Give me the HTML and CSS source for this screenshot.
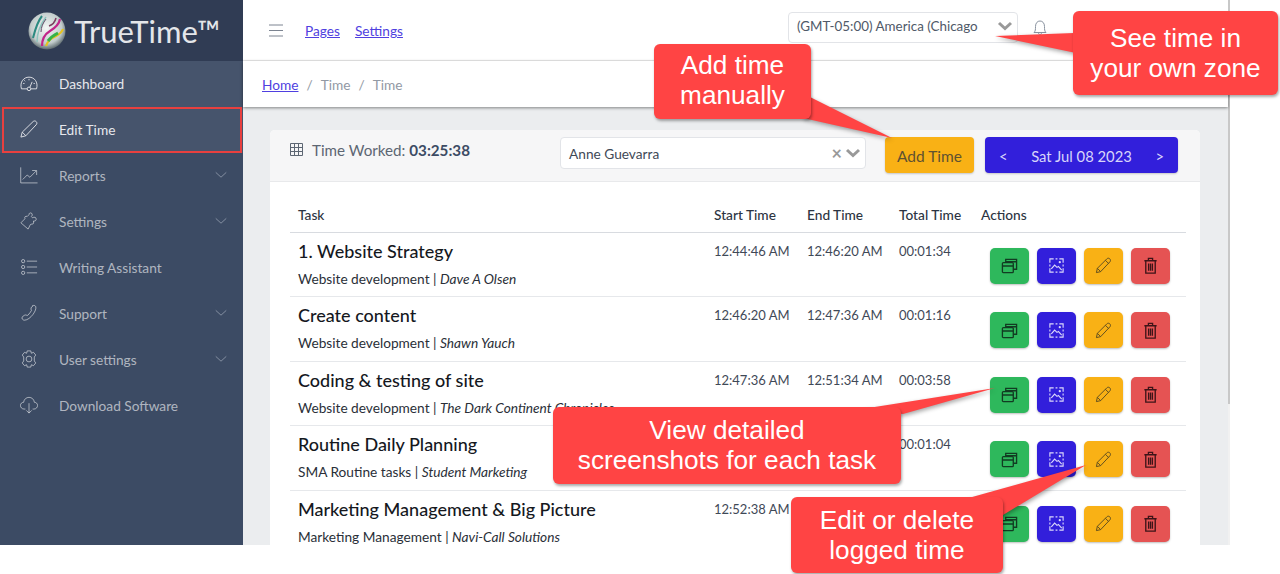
FILE: index.html
```html
<!DOCTYPE html>
<html lang="en">
<head>
  <meta charset="UTF-8">
  <meta name="viewport" content="width=device-width, initial-scale=1.0">
  <title>TrueTime - Edit Time</title>
  <link rel="stylesheet" href="styles.css">
</head>
<body>
  <svg class="defs" width="0" height="0">
    <symbol id="i-chev" viewBox="0 0 16 16"><path d="M2 5l6 5.500L14 5" fill="none" stroke="currentColor"/></symbol>
    <symbol id="i-copy" viewBox="0 0 18 18"><g fill="none" stroke="currentColor" stroke-width="1.400"><rect x="1.500" y="6" width="11.500" height="10.500" rx="1"/><path d="M1.500 9.500H13M5 6V2.500h11.500V13H13M5 5h11.500"/></g></symbol>
    <symbol id="i-img" viewBox="0 0 18 18"><g fill="none" stroke="currentColor" stroke-width="1.200"><path d="M6 2H2v4M12 2h4v4M2 12v4h4M16 12v4h-4M8 2h2M8 16h2M2 8v2M16 8v2"/><path d="M3.500 12.500l3.500-4 2.500 2.500 1.500-1 3.500 4"/><circle cx="12.500" cy="5.500" r=".6"/></g></symbol>
    <symbol id="i-pen" viewBox="0 0 18 18"><g fill="none" stroke="currentColor" stroke-width="1"><path d="M1.500 16.500l1-4.500L12.500 2c1-1 2.300-.9 3.200 0s1 2.200 0 3.200L6 15.500z"/><path d="M2.500 12L6 15.500M11 3.500l3.500 3.500"/></g></symbol>
    <symbol id="i-trash" viewBox="0 0 18 18"><g fill="none" stroke="currentColor" stroke-width="1.400"><path d="M2.500 4h13M6.800 4V1.500h4.400V4M4 4v13h10V4M7 7v7.500M9 7v7.500M11 7v7.500"/></g></symbol>
  </svg>

  <div class="page">
    <aside class="sidebar">
      <div class="brand">
        <svg class="logo" width="40" height="38" viewBox="0 0 40 38">
          <defs>
            <radialGradient id="orb" cx="48%" cy="42%" r="58%">
              <stop offset="0" stop-color="#f4f7f6"/>
              <stop offset=".72" stop-color="#c3cdcc"/>
              <stop offset="1" stop-color="#5a676c"/>
            </radialGradient>
          </defs>
          <circle cx="20" cy="19" r="18.500" fill="url(#orb)"/>
          <path d="M6 26C8 18 10 10 15 4" fill="none" stroke="#2c8a80" stroke-width="2"/>
          <path d="M10 30c0-9 3-17 9-25" fill="none" stroke="#8ec4bd" stroke-width="1.500"/>
          <path d="M15 34c0-8 3-12 8-15s9-6 10-12" fill="none" stroke="#c2268a" stroke-width="2.200"/>
          <path d="M19 34c2-6 6-8 10-10s6-4 7-7" fill="none" stroke="#e6c21f" stroke-width="2.200"/>
          <path d="M21 29c3-4 6-6 10-8" fill="none" stroke="#35b34a" stroke-width="3"/>
          <path d="M22 14c3-1 6-4 7-8" fill="none" stroke="#7b3f5f" stroke-width="1.500"/>
          <path d="M14 20c0-5 2-9 5-13" fill="none" stroke="#5f4a66" stroke-width="1"/>
        </svg>
        <span class="brand-name">TrueTime™</span>
      </div>
      <nav class="nav">
        <a class="nav-item lit">
          <svg class="nav-icon" viewBox="0 0 20 20"><g fill="none" stroke="currentColor"><path d="M7.800 16.500H1.600C-.5 9 4 3.500 10 3.500S20.500 9 18.400 16.500H12.200"/><circle cx="10" cy="16.500" r="2"/><path d="M11 14.700l2.500-6M3.500 10.500h1.500M4.800 7l1 1M10 5.500v1.500M15 10.500h1.500"/></g></svg>
          <span>Dashboard</span>
        </a>
        <a class="nav-item lit">
          <svg class="nav-icon" viewBox="0 0 20 20"><g fill="none" stroke="currentColor"><path d="M1 19l1.500-5.500L14.500 1.800c1-1 2.500-1 3.500 0s1 2.500 0 3.500L6.500 17.500z"/><path d="M2.500 13.500l4 4"/></g></svg>
          <span>Edit Time</span>
        </a>
        <a class="nav-item">
          <svg class="nav-icon" viewBox="0 0 20 20"><g fill="none" stroke="currentColor"><path d="M.8 1.500v17.300H19.500"/><path d="M3 15l5-5 3 2.500L18 5.500M13.500 5h5v5"/></g></svg>
          <span>Reports</span>
          <svg class="nav-chev"><use href="#i-chev"/></svg>
        </a>
        <a class="nav-item">
          <svg class="nav-icon" viewBox="0 0 20 20"><g fill="none" stroke="currentColor"><path d="M1 12l4.500-4.500c-1-2 1-3.500 2.500-2.500L10 3c-.5-2 3-3 3.500-.5.500 1.500-.5 2-1 2.500L14 6.500c1.500-1.500 4.500-.5 4 1.800-.3 1.700-2 2-3 1.700-.2 1.500 1 3-1.500 3.500-.5 0-1.500 0-2 .5L9 19z"/></g></svg>
          <span>Settings</span>
          <svg class="nav-chev"><use href="#i-chev"/></svg>
        </a>
        <a class="nav-item">
          <svg class="nav-icon" viewBox="0 0 20 20"><g fill="none" stroke="currentColor"><circle cx="3.500" cy="3.500" r="1.800"/><circle cx="3.500" cy="10" r="1.800"/><circle cx="3.500" cy="16.500" r="1.800"/><path d="M7.500 3.500H19M7.500 10H19M7.500 16.500H19"/></g></svg>
          <span>Writing Assistant</span>
        </a>
        <a class="nav-item">
          <svg class="nav-icon" viewBox="0 0 20 20"><g fill="none" stroke="currentColor"><path d="M14 2c1-.8 3-.5 3.500 1 .6 2-.5 5-3 8.500S8 18 5 18c-2 0-3.500-2-2.500-3.500s3.500-3 5-2c.5.300 1 .300 1.500-.300 1.500-1.500 3-3.500 3.800-5.200-1.300-1.500-.5-3.800 1.700-5z"/></g></svg>
          <span>Support</span>
          <svg class="nav-chev"><use href="#i-chev"/></svg>
        </a>
        <a class="nav-item">
          <svg class="nav-icon" viewBox="0 0 20 20"><g fill="none" stroke="currentColor"><circle cx="10" cy="10" r="3.200"/><path d="M8 1h4l.6 2.600 2.400-1 2.500 3-1.600 2.200v4.400l1.600 2.200-2.500 3-2.400-1L12 19H8l-.6-2.600-2.400 1-2.500-3 1.600-2.200V7.800L2.500 5.600l2.500-3 2.400 1z"/></g></svg>
          <span>User settings</span>
          <svg class="nav-chev"><use href="#i-chev"/></svg>
        </a>
        <a class="nav-item">
          <svg class="nav-icon" viewBox="0 0 20 20"><g fill="none" stroke="currentColor"><path d="M6 14.500H4.500C2 14.500.5 12.500.5 10.500S2 7 4 7c.5-3.500 3-5.500 6-5.500s5.500 2 6 5.500c2 0 3.500 1.500 3.500 3.500s-1.500 4-4 4H14"/><path d="M10 8v11M7 16l3 3 3-3"/></g></svg>
          <span>Download Software</span>
        </a>
      </nav>
    </aside>

    <div class="main">
      <header class="topbar">
        <svg class="burger" width="14" height="13" viewBox="0 0 14 13"><path d="M0 1h14M0 6.500h14M0 12h14" stroke="#7c8491" fill="none"/></svg>
        <a class="top-link" href="#">Pages</a>
        <a class="top-link" href="#">Settings</a>
        <div class="select zone-select">
          <span>(GMT-05:00) America (Chicago</span>
          <svg class="sel-chev" width="16" height="10" viewBox="0 0 16 10"><path d="M2 2l6 5.500L14 2" fill="none" stroke="#999" stroke-width="3"/></svg>
        </div>
        <svg class="bell" width="14" height="16" viewBox="0 0 14 16"><path d="M1 12.500c1.500-1.500 1.500-3 1.500-6C2.500 3 4.500 1 7 1s4.500 2 4.500 5.500c0 3 0 4.500 1.500 6zM5.500 12.500c0 3 3 3 3 0" fill="none" stroke="#8a93a0"/></svg>
      </header>
      <div class="crumbs">
        <a href="#">Home</a>
        <span class="sep">/</span>
        <span>Time</span>
        <span class="sep">/</span>
        <span>Time</span>
      </div>

      <section class="content">
        <div class="card">
          <div class="card-head">
            <div class="worked">
              <svg width="13" height="13" viewBox="0 0 13 13"><path d="M.5.500h12v12H.5zM.5 4.500h12M.5 8.500h12M4.500.500v12M8.500.500v12" fill="none" stroke="#5d6673"/></svg>
              <span>Time Worked: <b>03:25:38</b></span>
            </div>
            <div class="select user-select">
              <span>Anne Guevarra</span>
              <span class="clear">×</span>
              <svg class="sel-chev" width="16" height="10" viewBox="0 0 16 10"><path d="M2 2l6 5.500L14 2" fill="none" stroke="#999" stroke-width="3"/></svg>
            </div>
            <button class="btn-add">Add Time</button>
            <div class="date-pick">
              <span>&lt;</span>
              <span>Sat Jul 08 2023</span>
              <span>&gt;</span>
            </div>
          </div>

          <table class="tasks">
            <thead>
              <tr>
                <th class="c-task">Task</th>
                <th class="c-start">Start Time</th>
                <th class="c-end">End Time</th>
                <th class="c-total">Total Time</th>
                <th>Actions</th>
              </tr>
            </thead>
            <tbody id="rows"></tbody>
          </table>
        </div>
      </section>
    </div>
    <div class="scrollbar"><div class="thumb"></div></div>
  </div>

  <div class="edit-mark"></div>

  <!-- callouts on top of the page -->
  <svg class="tails" width="1280" height="574" viewBox="0 0 1280 574">
    <polygon points="995,36 1074,33 1076,53"/>
    <polygon points="892,138 808,96 803,118"/>
    <polygon points="995,388 862,409 903,414"/>
    <polygon points="1086,465 965,499 1003,515"/>
  </svg>
  <div class="callout c-zone">See time in<br>your own zone</div>
  <div class="callout c-add">Add time<br>manually</div>
  <div class="callout c-view">View detailed<br>screenshots for each task</div>
  <div class="callout c-edit">Edit or delete<br>logged time</div>

  <script>
    // cells the callouts hide in the picture stay empty
    const rows = [
      { title: '1. Website Strategy', project: 'Website development', client: 'Dave A Olsen', start: '12:44:46 AM', end: '12:46:20 AM', total: '00:01:34' },
      { title: 'Create content', project: 'Website development', client: 'Shawn Yauch', start: '12:46:20 AM', end: '12:47:36 AM', total: '00:01:16' },
      { title: 'Coding &amp; testing of site', project: 'Website development', client: 'The Dark Continent Chronicles', start: '12:47:36 AM', end: '12:51:34 AM', total: '00:03:58' },
      { title: 'Routine Daily Planning', project: 'SMA Routine tasks', client: 'Student Marketing', start: '', end: '', total: '00:01:04' },
      { title: 'Marketing Management &amp; Big Picture', project: 'Marketing Management', client: 'Navi-Call Solutions', start: '12:52:38 AM', end: '', total: '' }
    ];

    const tbody = document.getElementById('rows');
    rows.forEach((item) => {
      const row = document.createElement('tr');
      row.innerHTML = `
        <td>
          <div class="task-title">${item.title}</div>
          <div class="task-sub">${item.project} | <i>${item.client}</i></div>
        </td>
        <td class="clock">${item.start}</td>
        <td class="clock">${item.end}</td>
        <td class="clock">${item.total}</td>
        <td>
          <div class="actions">
            <a class="act green"><svg><use href="#i-copy"/></svg></a>
            <a class="act blue"><svg><use href="#i-img"/></svg></a>
            <a class="act amber"><svg><use href="#i-pen"/></svg></a>
            <a class="act red"><svg><use href="#i-trash"/></svg></a>
          </div>
        </td>
      `;
      tbody.appendChild(row);
    });
  </script>
</body>
</html>
```

FILE: styles.css
```css
html, body {
  margin: 0;
  padding: 0;
  height: 574px;
  overflow: hidden;
  background: #fff;
}

body {
  font-family: Lato, "Noto Sans", sans-serif;
  font-size: 13.7px;
  color: #2f3a4c;
  position: relative;
}

.defs {
  position: absolute;
}

.page {
  display: flex;
  width: 1230px;
  height: 545px;
  overflow: hidden;
}

/* sidebar */
.sidebar {
  width: 243px;
  flex: none;
  background: #3c4b64;
}

.brand {
  height: 61px;
  background: #303c54;
  display: flex;
  align-items: center;
  padding-left: 27px;
  gap: 7px;
}

.brand-name {
  font-size: 31px;
  color: #e4e6ea;
}

.nav-item {
  height: 46px;
  box-sizing: border-box;
  padding: 0 0 2px 20px;
  display: flex;
  align-items: center;
  color: rgba(255, 255, 255, .6);
}

.nav-item.lit {
  background: #46546c;
  color: #e6e8ec;
}

.nav-icon {
  width: 18px;
  height: 18px;
  margin-right: 21px;
  flex: none;
}

.nav-chev {
  width: 14px;
  height: 14px;
  margin-left: auto;
  margin-right: 15px;
  color: #8d97a8;
}

/* top of main */
.main {
  width: 985px;
  flex: none;
  background: #ebedef;
}

.topbar {
  height: 60px;
  background: #fff;
  border-bottom: 1px solid #ececec;
  display: flex;
  align-items: center;
  padding: 0 181px 0 26px;
}

.burger {
  margin-right: 22px;
}

.top-link {
  color: #4f3fe0;
  margin-right: 15px;
  margin-top: 1px;
}

.select {
  background: #fff;
  border: 1px solid #e2e4e8;
  border-radius: 4px;
  display: flex;
  align-items: center;
  box-sizing: border-box;
}

.zone-select {
  width: 230px;
  height: 31px;
  margin-left: auto;
  margin-bottom: 6px;
  padding: 0 4px 2px 8px;
  font-size: 13.4px;
  color: #4f5968;
  justify-content: space-between;
}

.bell {
  margin-left: 15px;
  margin-bottom: 4px;
}

.crumbs {
  height: 46px;
  background: #fff;
  box-shadow: 0 1px 3px rgba(0, 0, 0, .45);
  display: flex;
  align-items: center;
  padding-left: 19px;
  color: #9299a4;
  gap: 8px;
  position: relative;
}

.crumbs a {
  color: #4f3fe0;
}

/* card */
.content {
  padding: 23px 28px 0 27px;
}

.card {
  background: #fff;
  border-radius: 5px 5px 0 0;
  height: 420px;
}

.card-head {
  height: 51px;
  background: #f6f6f7;
  border-bottom: 1px solid #e8e9eb;
  border-radius: 5px 5px 0 0;
  display: flex;
  align-items: flex-start;
  padding-left: 20px;
}

.worked {
  width: 270px;
  flex: none;
  display: flex;
  align-items: center;
  gap: 9px;
  font-size: 15.2px;
  color: #5d6673;
  height: 39px;
}

.worked b {
  color: #3c4b64;
}

.user-select {
  width: 306px;
  height: 32px;
  margin-top: 7px;
  padding: 0 4px 0 8px;
  color: #3f4957;
}

.clear {
  margin-left: auto;
  margin-right: 3px;
  color: #999;
  font-size: 18px;
  font-weight: 700;
  line-height: 1;
}

.btn-add {
  width: 89px;
  height: 36px;
  margin: 7px 0 0 19px;
  padding: 2px 0 0;
  background: #f9b115;
  border: 0;
  border-radius: 4px;
  font: inherit;
  font-size: 15.5px;
  color: #5f5231;
  box-shadow: 0 1px 2px rgba(0, 0, 0, .2);
}

.date-pick {
  width: 193px;
  height: 36px;
  margin: 7px 0 0 11px;
  background: #321fdb;
  border-radius: 4px;
  color: #d8d5fa;
  font-size: 14.8px;
  display: flex;
  align-items: center;
  justify-content: space-between;
  padding: 2px 14px 0;
  box-sizing: border-box;
  box-shadow: 0 1px 2px rgba(0, 0, 0, .2);
}

/* table */
.tasks {
  border-collapse: collapse;
  table-layout: fixed;
  width: 896px;
  margin-left: 20px;
  margin-top: 16px;
}

.tasks th {
  text-align: left;
  font-weight: 500;
  box-sizing: border-box;
  height: 34px;
  padding: 8px 0 0 8px;
  color: #2c3442;
  border-bottom: 1px solid #d8dbe0;
  vertical-align: top;
}

.c-task {
  width: 416px;
}

.c-start {
  width: 93px;
}

.c-end {
  width: 92px;
}

.c-total {
  width: 82px;
}

.tasks td {
  vertical-align: top;
  height: 64.5px;
  padding: 8px 0 0 8px;
  border-bottom: 1px solid #e6e8eb;
  box-sizing: border-box;
  color: #3f4957;
}

.tasks td.clock {
  font-size: 13px;
  padding-top: 10px;
  white-space: nowrap;
}

.task-title {
  font-size: 18px;
  font-weight: 500;
  color: #15181e;
  line-height: 22px;
  margin-top: -1px;
}

.task-sub {
  margin-top: 8px;
  color: #2a2f38;
  line-height: 18px;
}

.actions {
  display: flex;
  gap: 8px;
  margin: 7px 0 0 9px;
}

.act {
  width: 39px;
  height: 36px;
  border-radius: 5px;
  display: flex;
  align-items: center;
  justify-content: center;
  box-shadow: 0 1px 2px rgba(0, 0, 0, .25);
}

.act svg {
  width: 17px;
  height: 17px;
}

.green {
  background: #2eb85c;
  color: #123b22;
}

.blue {
  background: #321fdb;
  color: #dcd9fb;
}

.amber {
  background: #f9b115;
  color: #5a4a20;
}

.red {
  background: #e55353;
  color: #3d1418;
}

.scrollbar {
  width: 2px;
  background: #f1f1f1;
}

.thumb {
  height: 404px;
  background: #c8c8c8;
}

/* annotation layer */
.edit-mark {
  position: absolute;
  left: 2px;
  top: 107px;
  width: 240px;
  height: 46px;
  border: 2px solid #e8403f;
  box-sizing: border-box;
}

.tails {
  position: absolute;
  left: 0;
  top: 0;
  fill: #ff4444;
  filter: drop-shadow(1px 2px 2px rgba(0, 0, 0, .35));
}

.callout {
  position: absolute;
  background: #ff4444;
  border-radius: 6px;
  color: #fff;
  font-family: "Liberation Sans", Arial, sans-serif;
  font-size: 26.2px;
  line-height: 30px;
  text-align: center;
  box-shadow: 1px 2px 3px rgba(0, 0, 0, .35);
  box-sizing: border-box;
  padding-top: 12px;
}

.c-zone {
  left: 1073px;
  top: 11px;
  width: 205px;
  height: 84px;
}

.c-add {
  left: 654px;
  top: 44px;
  width: 157px;
  height: 75px;
  padding-top: 6px;
}

.c-view {
  left: 553px;
  top: 407px;
  width: 348px;
  height: 77px;
  padding-top: 8px;
}

.c-edit {
  left: 791px;
  top: 497px;
  width: 212px;
  height: 76px;
  padding-top: 8px;
}
```
